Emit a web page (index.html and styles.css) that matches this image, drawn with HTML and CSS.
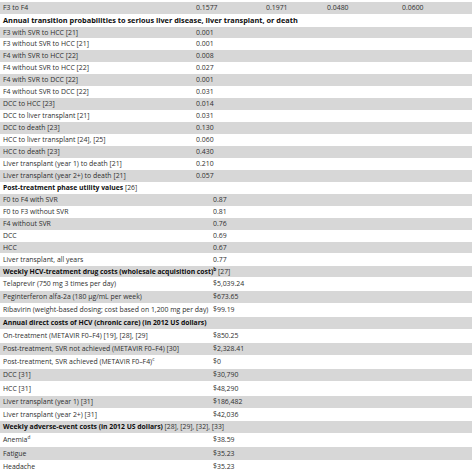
FILE: index.html
```html
<!DOCTYPE html>
<html>
<head>
<meta charset="utf-8">
<link rel="stylesheet" href="styles.css">
</head>
<body>
<table class="tbl">
<colgroup><col class="c0"><col class="c1"><col class="c2"><col class="c3"><col class="c4"></colgroup>
<tbody>
<tr class="top"><td colspan="5"></td></tr>
<tr class="g"><td>F3 to F4</td><td>0.1577</td><td>0.1971</td><td>0.0480</td><td>0.0600</td></tr>
<tr class="h h13 wide"><td colspan="5">Annual transition probabilities to serious liver disease, liver transplant, or death</td></tr>
<tr class="g h11"><td>F3 with SVR to HCC [21]</td><td>0.001</td><td></td><td></td><td></td></tr>
<tr><td>F3 without SVR to HCC [21]</td><td>0.001</td><td></td><td></td><td></td></tr>
<tr class="g"><td>F4 with SVR to HCC [22]</td><td>0.008</td><td></td><td></td><td></td></tr>
<tr><td>F4 without SVR to HCC [22]</td><td>0.027</td><td></td><td></td><td></td></tr>
<tr class="g"><td>F4 with SVR to DCC [22]</td><td>0.001</td><td></td><td></td><td></td></tr>
<tr><td>F4 without SVR to DCC [22]</td><td>0.031</td><td></td><td></td><td></td></tr>
<tr class="g"><td>DCC to HCC [23]</td><td>0.014</td><td></td><td></td><td></td></tr>
<tr><td>DCC to liver transplant [21]</td><td>0.031</td><td></td><td></td><td></td></tr>
<tr class="g"><td>DCC to death [23]</td><td>0.130</td><td></td><td></td><td></td></tr>
<tr><td>HCC to liver transplant [24], [25]</td><td>0.060</td><td></td><td></td><td></td></tr>
<tr class="g"><td>HCC to death [23]</td><td>0.430</td><td></td><td></td><td></td></tr>
<tr><td>Liver transplant (year 1) to death [21]</td><td>0.210</td><td></td><td></td><td></td></tr>
<tr class="g"><td>Liver transplant (year 2+) to death [21]</td><td>0.057</td><td></td><td></td><td></td></tr>
<tr class="h"><td colspan="5">Post-treatment phase utility values <span class="n">[26]</span></td></tr>
<tr class="g s2"><td>F0 to F4 with SVR</td><td>0.87</td><td></td><td></td><td></td></tr>
<tr class="s2"><td>F0 to F3 without SVR</td><td>0.81</td><td></td><td></td><td></td></tr>
<tr class="g s2"><td>F4 without SVR</td><td>0.76</td><td></td><td></td><td></td></tr>
<tr class="s2"><td>DCC</td><td>0.69</td><td></td><td></td><td></td></tr>
<tr class="g h11 s2"><td>HCC</td><td>0.67</td><td></td><td></td><td></td></tr>
<tr class="h13 s2"><td>Liver transplant, all years</td><td>0.77</td><td></td><td></td><td></td></tr>
<tr class="g h h11"><td colspan="5">Weekly HCV-treatment drug costs (wholesale acquisition cost)<sup>b</sup> <span class="n">[27]</span></td></tr>
<tr class="h14 s2"><td>Telaprevir (750 mg 3 times per day)</td><td>$5,039.24</td><td></td><td></td><td></td></tr>
<tr class="g s2"><td>Peginterferon alfa-2a (180 µg/mL per week)</td><td>$673.65</td><td></td><td></td><td></td></tr>
<tr class="h14 s2"><td>Ribavirin (weight-based dosing; cost based on 1,200 mg per day)</td><td>$99.19</td><td></td><td></td><td></td></tr>
<tr class="g h"><td colspan="5">Annual direct costs of HCV (chronic care) (in 2012 US dollars)</td></tr>
<tr class="h14 s2"><td>On-treatment (METAVIR F0–F4) [19], [28], [29]</td><td>$850.25</td><td></td><td></td><td></td></tr>
<tr class="g s2"><td>Post-treatment, SVR not achieved (METAVIR F0–F4) [30]</td><td>$2,328.41</td><td></td><td></td><td></td></tr>
<tr class="h14 s2"><td>Post-treatment, SVR achieved (METAVIR F0–F4)<sup>c</sup></td><td>$0</td><td></td><td></td><td></td></tr>
<tr class="g s2"><td>DCC [31]</td><td>$30,790</td><td></td><td></td><td></td></tr>
<tr class="h15 s2"><td>HCC [31]</td><td>$48,290</td><td></td><td></td><td></td></tr>
<tr class="g s2"><td>Liver transplant (year 1) [31]</td><td>$186,482</td><td></td><td></td><td></td></tr>
<tr class="h13 s2"><td>Liver transplant (year 2+) [31]</td><td>$42,036</td><td></td><td></td><td></td></tr>
<tr class="g h"><td colspan="5">Weekly adverse-event costs (in 2012 US dollars) <span class="n">[28], [29], [32], [33]</span></td></tr>
<tr class="h14 s2"><td>Anemia<sup>d</sup></td><td>$38.59</td><td></td><td></td><td></td></tr>
<tr class="g h13 s2"><td>Fatigue</td><td>$35.23</td><td></td><td></td><td></td></tr>
<tr class="h14 s2"><td>Headache</td><td>$35.23</td><td></td><td></td><td></td></tr>
</tbody>
</table>
</body>
</html>
```

FILE: styles.css
```css
html, body {
  margin: 0;
  padding: 0;
  background: #ffffff;
}
body {
  width: 474px;
  height: 474px;
  overflow: hidden;
  font-family: "Open Sans", "DejaVu Sans", sans-serif;
  font-size: 6.9px;
  color: #2e2e2e;
}
.tbl {
  border-collapse: collapse;
  width: 472px;
  table-layout: fixed;
}
.c0 { width: 196px; }
.c1 { width: 70px; }
.c2 { width: 61px; }
.c3 { width: 75px; }
.c4 { width: 70px; }
.tbl td {
  padding: 0 0 0 3px;
  height: 12px;
  line-height: 12px;
  white-space: nowrap;
  overflow: visible;
  vertical-align: middle;
}
.tbl tr td:not(:first-child) {
  padding-left: 0;
}
.tbl tr.s2 td:nth-child(2) {
  padding-left: 17px;
}
.top td { height: 2px; line-height: 2px; }
.g td { background: #d7d7d7; }
.h td {
  font-weight: 700;
  font-size: 6.8px;
  color: #0e0e0e;
}
.h.wide td { font-size: 7.35px; }
.h .n { font-weight: 400; color: #2e2e2e; }
.h11 td { height: 11px; line-height: 11px; }
.h13 td { height: 13px; line-height: 13px; }
.h14 td { height: 14px; line-height: 14px; }
.h15 td { height: 15px; line-height: 15px; }
sup {
  font-size: 4.8px;
  line-height: 0;
  vertical-align: 3px;
}
```
